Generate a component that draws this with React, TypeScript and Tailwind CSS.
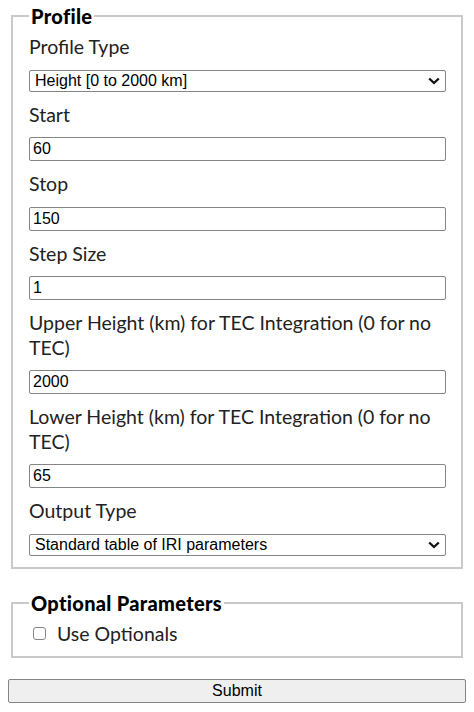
function Chevron() {
  return (
    <svg
      className="pointer-events-none absolute right-[5px] top-1/2 -translate-y-1/2"
      width="12"
      height="8"
      viewBox="0 0 12 8"
      fill="none"
    >
      <polyline points="1.2,1.5 6,6 10.8,1.5" stroke="#111" strokeWidth="2.3" strokeLinejoin="miter" />
    </svg>
  );
}

function Select({ value }: { value: string }) {
  return (
    <div className="relative h-[22px] w-full rounded-[2px] border border-[#858585] bg-white">
      <div className="pl-[5px] font-['Liberation_Sans',Arial,sans-serif] text-[16px] leading-[20px] text-black">
        {value}
      </div>
      <Chevron />
    </div>
  );
}

function TextInput({ value }: { value: string }) {
  return (
    <input
      readOnly
      value={value}
      className="block h-[24px] w-full rounded-[2px] border border-[#858585] bg-white px-[3px] font-['Liberation_Sans',Arial,sans-serif] text-[16px] text-black outline-none"
    />
  );
}

function Label({ children, first }: { children: React.ReactNode; first?: boolean }) {
  return (
    <div
      className={
        first
          ? "mt-[7px] mb-[10px] text-[19.5px] leading-[24.5px] text-[#222]"
          : "mt-[11px] mb-[10px] text-[19.5px] leading-[24.5px] text-[#222]"
      }
    >
      {children}
    </div>
  );
}

export default function App() {
  return (
    <div className="min-h-screen bg-white pt-1 font-['Lato',sans-serif]">
      <fieldset className="mx-[11px] min-w-0 border-2 border-[#c9c9c9] pb-[11px] pl-4 pr-[15px]">
        <legend className="px-[2px] text-[20px] font-black leading-[24px] tracking-[0.3px] text-black">
          Profile
        </legend>
        <Label first>Profile Type</Label>
        <Select value="Height [0 to 2000 km]" />
        <Label>Start</Label>
        <TextInput value="60" />
        <Label>Stop</Label>
        <TextInput value="150" />
        <Label>Step Size</Label>
        <TextInput value="1" />
        <Label>Upper Height (km) for TEC Integration (0 for no TEC)</Label>
        <TextInput value="2000" />
        <Label>Lower Height (km) for TEC Integration (0 for no TEC)</Label>
        <TextInput value="65" />
        <Label>Output Type</Label>
        <Select value="Standard table of IRI parameters" />
      </fieldset>

      <fieldset className="mx-[11px] mt-[22px] min-w-0 border-2 border-[#c9c9c9] pb-[10px] pl-4 pr-[15px]">
        <legend className="px-[2px] text-[20px] font-black leading-[24px] tracking-[0.3px] text-black">
          Optional Parameters
        </legend>
        <label className="mt-[7px] flex items-center text-[19.5px] leading-[24.5px] text-[#222]">
          <span className="ml-1 mr-[11px] h-[13px] w-[13px] shrink-0 rounded-[3px] border border-[#858585] bg-white" />
          Use Optionals
        </label>
      </fieldset>

      <div className="mx-2 mt-[21px]">
        <button className="block h-[24px] w-full rounded-[2px] border border-[#858585] bg-[#efefef] font-['Liberation_Sans',Arial,sans-serif] text-[16px] leading-[22px] text-black">
          Submit
        </button>
      </div>
    </div>
  );
}
